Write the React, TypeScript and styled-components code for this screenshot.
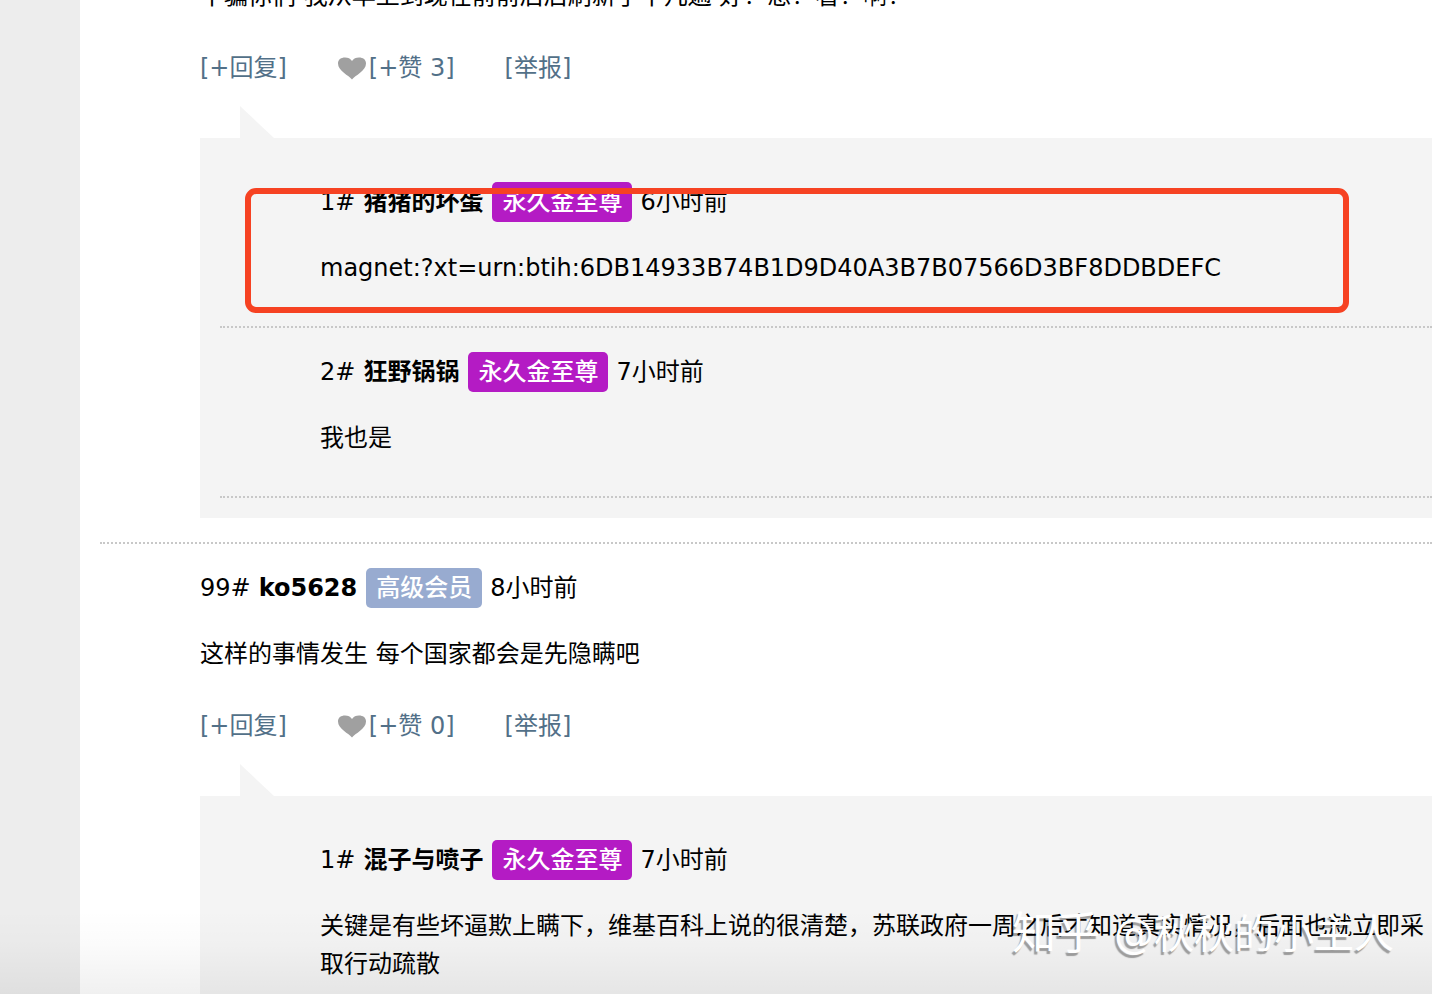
import React from "react";
import styled, { createGlobalStyle } from "styled-components";

const GlobalStyle = createGlobalStyle`
  * { box-sizing: border-box; }
  body {
    margin: 0;
    background: #ededed;
    color: #000;
    font: 24px/38px "DejaVu Sans", "Noto Sans CJK SC", sans-serif;
  }
`;

const Page = styled.div`
  position: relative;
  height: 100vh;
  overflow: hidden;
  padding-left: 80px;
`;

const Thread = styled.main`
  background: #fff;
  padding-left: 20px;
  min-height: 100vh;
  margin-top: -74px;
`;

const Comment = styled.article`
  padding: 24px 0 24px 100px;
  border-bottom: 2px dotted #c8c8c8;
`;

const Header = styled.header`
  display: flex;
  align-items: center;
  gap: 8px;
  height: 40px;
  white-space: nowrap;
`;

const Name = styled.strong`
  padding-right: 1px;
`;

const Badge = styled.span<{ $color: string }>`
  padding: 1px 10px;
  border-radius: 5px;
  background: ${(p) => p.$color};
  color: #fff;
  font-weight: 500;
`;

const Message = styled.p`
  margin: 27px 0 0;
`;

const Actions = styled.div`
  display: flex;
  align-items: center;
  gap: 50px;
  margin-top: 34px;
`;

const Action = styled.button`
  display: flex;
  align-items: center;
  gap: 2px;
  padding: 0;
  border: 0;
  background: none;
  color: #527088;
  font: inherit;
  white-space: pre;
  cursor: pointer;
`;

const HeartIcon = styled.svg`
  width: 30px;
  height: 24px;
  fill: #a0a0a0;
`;

const Replies = styled.section`
  position: relative;
  margin-top: 51px;
  padding: 20px 0 20px 20px;
  background: #f4f4f4;

  &::before {
    content: "";
    position: absolute;
    left: 40px;
    top: -32px;
    border-left: 34px solid #f4f4f4;
    border-top: 32px solid transparent;
  }
`;

const Reply = styled.article`
  position: relative;
  padding: 24px 0 39px 100px;
  border-bottom: 2px dotted #c8c8c8;
`;

const Highlight = styled.div`
  position: absolute;
  left: 25px;
  right: 83px;
  top: 30px;
  bottom: 13px;
  border: 6px solid #f64222;
  border-radius: 11px;
`;

const Shade = styled.div`
  position: absolute;
  left: 0;
  right: 0;
  bottom: 0;
  height: 84px;
  background: linear-gradient(rgba(0, 0, 0, 0), rgba(0, 0, 0, 0.015) 40%, rgba(0, 0, 0, 0.06));
`;

const Watermark = styled.div`
  position: absolute;
  right: 38px;
  bottom: 38px;
  display: flex;
  align-items: center;
  gap: 14px;
  color: #fff;
  font-size: 40px;
  line-height: 44px;
  text-shadow: -2px 3px 1px rgba(0, 0, 0, 0.35);
  white-space: nowrap;
`;

const Brand = styled.span`
  font-size: 44px;
`;

const PURPLE = "#b41bc4";
const BLUE = "#98abd0";

type Author = { floor: string; name: string; level: string; color: string; time: string };

function AuthorLine({ floor, name, level, color, time }: Author) {
  return (
    <Header>
      <span>{floor}</span>
      <Name>{name}</Name>
      <Badge $color={color}>{level}</Badge>
      <time>{time}</time>
    </Header>
  );
}

function ActionBar({ likes }: { likes: number }) {
  return (
    <Actions>
      <Action type="button">[+回复]</Action>
      <Action type="button">
        <HeartIcon viewBox="0 0 30 24" aria-hidden="true">
          <path d="M15 23.500C12 19.500 1 15 1 7.500C1 3.500 4 1.500 8 1.500C11 1.500 13.500 2.500 15 5C16.500 2.500 19 1.500 22 1.500C26 1.500 29 3.500 29 7.500C29 15 18 19.500 15 23.500Z" />
        </HeartIcon>
        {`[+赞 ${likes}]`}
      </Action>
      <Action type="button">[举报]</Action>
    </Actions>
  );
}

export default function App() {
  return (
    <>
      <GlobalStyle />
      <Page>
        <Thread>
          <Comment>
            <Message>不骗你们 我从早上到现在前前后后刷新了十几遍 好！想！看！啊！</Message>
            <ActionBar likes={3} />
            <Replies>
              <Reply>
                <AuthorLine floor="1#" name="猪猪的坏蛋" level="永久金至尊" color={PURPLE} time="6小时前" />
                <Message>magnet:?xt=urn:btih:6DB14933B74B1D9D40A3B7B07566D3BF8DDBDEFC</Message>
                <Highlight />
              </Reply>
              <Reply>
                <AuthorLine floor="2#" name="狂野锅锅" level="永久金至尊" color={PURPLE} time="7小时前" />
                <Message>我也是</Message>
              </Reply>
            </Replies>
          </Comment>
          <Comment>
            <AuthorLine floor="99#" name="ko5628" level="高级会员" color={BLUE} time="8小时前" />
            <Message>这样的事情发生 每个国家都会是先隐瞒吧</Message>
            <ActionBar likes={0} />
            <Replies>
              <Reply>
                <AuthorLine floor="1#" name="混子与喷子" level="永久金至尊" color={PURPLE} time="7小时前" />
                <Message>
                  关键是有些坏逼欺上瞒下，维基百科上说的很清楚，苏联政府一周之后才知道真实情况，后面也就立即采取行动疏散
                </Message>
              </Reply>
            </Replies>
          </Comment>
        </Thread>
        <Shade />
        <Watermark>
          <Brand>知乎</Brand>
          <span>@秋秋的小主人</span>
        </Watermark>
      </Page>
    </>
  );
}
